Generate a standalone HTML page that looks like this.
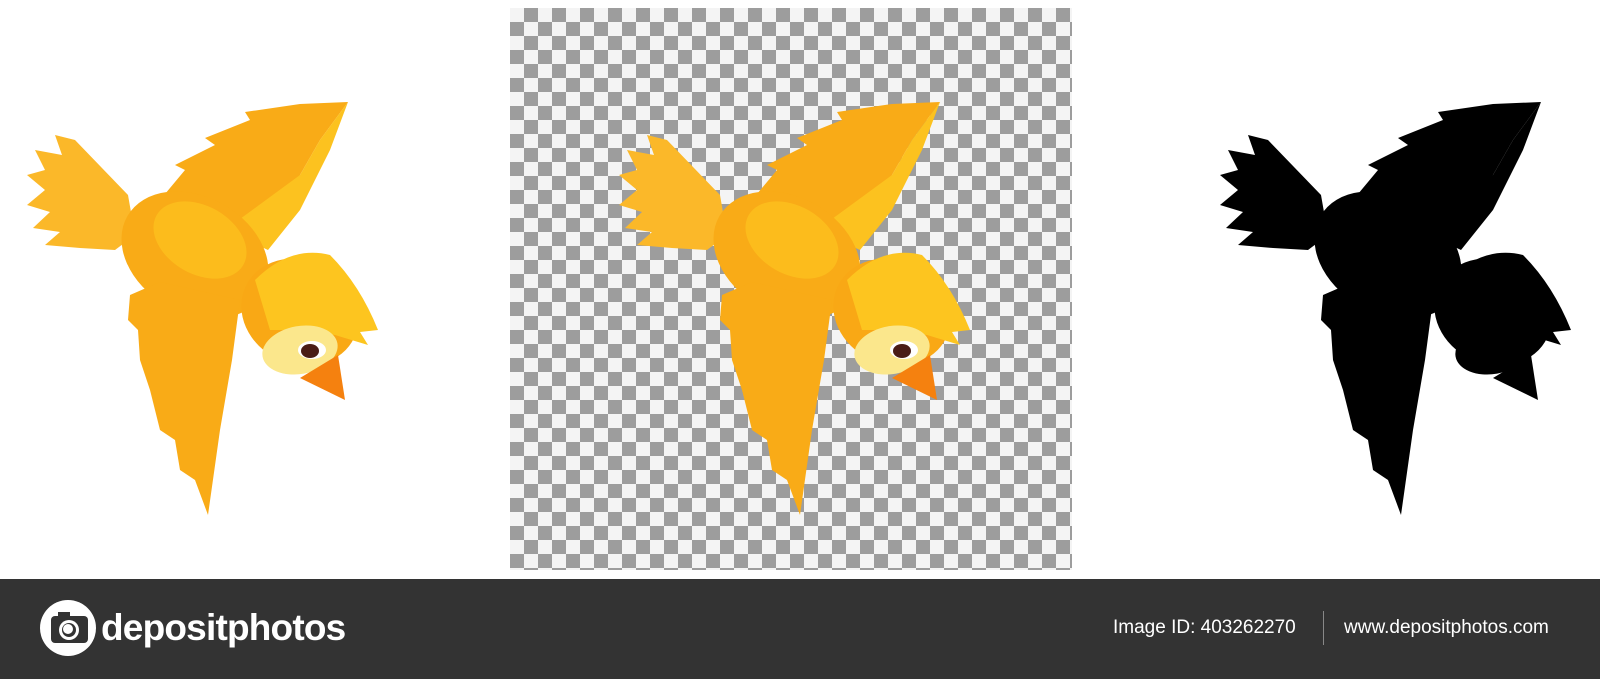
<!DOCTYPE html>
<html><head><meta charset="utf-8"><style>
html,body{margin:0;padding:0;width:1600px;height:679px;overflow:hidden;background:#fff;font-family:"Liberation Sans",sans-serif}
#chk{position:absolute;left:510px;top:8px;width:562px;height:562px;
background-color:#f4f4f4;
background-image:linear-gradient(45deg,#9d9d9d 25%,transparent 25%,transparent 75%,#9d9d9d 75%),linear-gradient(45deg,#9d9d9d 25%,transparent 25%,transparent 75%,#9d9d9d 75%);
background-size:28px 28px;background-position:0 0,14px 14px}
#bar{position:absolute;left:0;top:579px;width:1600px;height:100px;background:#333}
svg{position:absolute;left:0;top:0}
</style></head><body>
<div id="chk"></div>
<svg width="1600" height="679" viewBox="0 0 1600 679">
<defs>
<g id="bird">
 <path d="M128,195 L75,140 L55,135 L62,155 L35,150 L45,170 L27,175 L45,190 L27,205 L50,212 L33,228 L60,232 L45,245 L80,248 L115,250 L135,235 Z" fill="#fbb829"/>
 <path d="M160,200 L185,170 L175,165 L215,145 L205,138 L250,120 L245,112 L300,104 L348,102 L320,140 L300,175 L285,215 L262,250 L220,240 Z" fill="#f9ab17"/>
 <path d="M225,230 L300,175 L320,140 L348,102 L330,150 L300,210 L268,250 Z" fill="#fcc21f"/>
 <ellipse cx="195" cy="255" rx="78" ry="58" transform="rotate(30 195 255)" fill="#f9ab17"/>
 <ellipse cx="200" cy="240" rx="50" ry="34" transform="rotate(30 200 240)" fill="#fcbc1c"/>
 <path d="M130,295 L160,282 L240,300 L232,360 L220,430 L208,515 L195,480 L180,470 L175,440 L160,430 L150,390 L140,360 L138,330 L128,320 Z" fill="#f9ab17"/>
 <ellipse cx="300" cy="312" rx="60" ry="52" transform="rotate(25 300 312)" fill="#f9a815"/>
 <path d="M255,280 Q290,245 330,255 Q360,285 378,330 L360,332 L368,345 L335,335 L300,330 L270,330 Z" fill="#fdc51f"/>
 <ellipse cx="300" cy="350" rx="38" ry="24" transform="rotate(-10 300 350)" fill="#fbe78c"/>
 <ellipse cx="312" cy="350" rx="14" ry="9" fill="#fff"/>
 <ellipse cx="310" cy="351" rx="9" ry="7" fill="#4a1d16"/>
 <path d="M300,378 L338,355 L345,400 Z" fill="#f5810f"/>
</g>
</defs>
<use href="#bird"/>
<use href="#bird" x="592" y="0"/>
<g transform="translate(1193,0)"><use href="#bird" style="filter:brightness(0)"/></g>
</svg>
<div id="bar">
 <svg width="400" height="100" viewBox="0 0 400 100" style="left:0;top:0">
  <circle cx="68" cy="49" r="28" fill="#fff"/>
  <rect x="51" y="37" width="37" height="27" rx="4" fill="#333"/>
  <rect x="58" y="33" width="12" height="6" fill="#333"/>
  <circle cx="69" cy="51" r="10" fill="#fff"/>
  <circle cx="69" cy="51" r="7" fill="#333"/>
  <circle cx="68" cy="50" r="5" fill="#fff"/>
 </svg>
 <div style="position:absolute;left:101px;top:24px;color:#fff;font-weight:bold;font-size:37px;letter-spacing:-0.8px;line-height:50px">depositphotos</div>
 <div style="position:absolute;left:1113px;top:37px;color:#fff;font-size:19px;line-height:24px">Image ID: 403262270</div>
 <div style="position:absolute;left:1323px;top:32px;width:1px;height:34px;background:#888"></div>
 <div style="position:absolute;left:1344px;top:37px;color:#fff;font-size:19px;line-height:24px">www.depositphotos.com</div>
</div>
</body></html>
